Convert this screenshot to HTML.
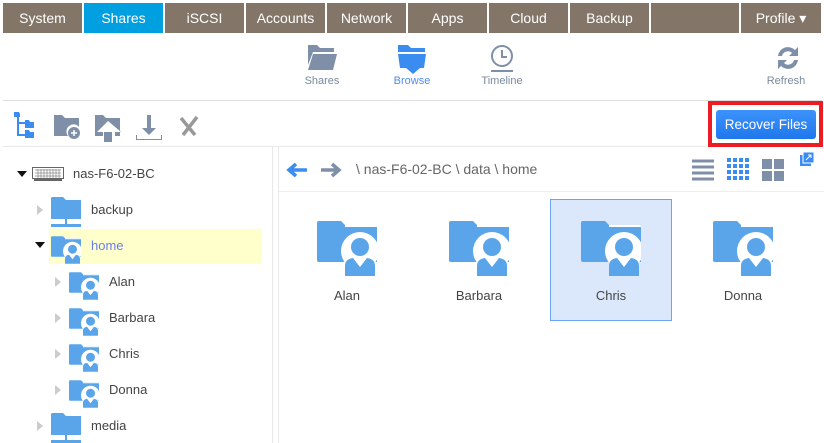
<!DOCTYPE html>
<html><head><meta charset="utf-8"><style>
*{margin:0;padding:0;box-sizing:border-box}
body{width:824px;height:443px;overflow:hidden;background:#fff;font-family:"Liberation Sans",sans-serif;position:relative;color:#444}
.a{position:absolute}
.tab{position:absolute;top:3px;height:30px;background:#837669;color:#fff;font-size:14px;text-align:center;line-height:30px}
.lbl{position:absolute;font-size:11px;color:#7a8a9e;text-align:center}
.tr{position:absolute;font-size:13px;color:#444}
.tri{position:absolute;width:0;height:0;border-top:5px solid transparent;border-bottom:5px solid transparent;border-left:6px solid #ccc}
.trd{position:absolute;width:0;height:0;border-left:5px solid transparent;border-right:5px solid transparent;border-top:6px solid #111}
.gl{position:absolute;font-size:13px;color:#444;text-align:center;width:122px}
</style></head><body>
<svg width="0" height="0" style="position:absolute">
<defs>
<symbol id="pf" viewBox="0 0 60 55">
<path fill="#5aa5ea" d="M2 0h22l4 4h32v37H2a2 2 0 0 1-2-2V2a2 2 0 0 1 2-2z"/>
<rect x="28" y="4" width="32" height="2" fill="#fff"/>
<circle cx="43" cy="30" r="19" fill="#fff"/>
<circle cx="43" cy="26" r="9" fill="#5aa5ea"/>
<path fill="#5aa5ea" d="M28 55V45q0-7 8-8l7 9l7-9q8 1 8 8v10z"/>
</symbol>
<symbol id="sf" viewBox="0 0 30 30">
<path fill="#5aa5ea" d="M1 0h11l3 3h15v19H0V1z"/>
<rect x="0" y="27" width="30" height="3" fill="#5aa5ea"/><rect x="14" y="22" width="2" height="5" fill="#5aa5ea"/>
</symbol>
</defs></svg>

<div class="tab" style="left:3px;width:79px">System</div>
<div class="tab" style="left:84px;width:79px;background:#009fe0">Shares</div>
<div class="tab" style="left:165px;width:79px">iSCSI</div>
<div class="tab" style="left:246px;width:79px">Accounts</div>
<div class="tab" style="left:327px;width:79px">Network</div>
<div class="tab" style="left:408px;width:79px">Apps</div>
<div class="tab" style="left:489px;width:79px">Cloud</div>
<div class="tab" style="left:570px;width:79px">Backup</div>
<div class="tab" style="left:651px;width:88px"></div>
<div class="tab" style="left:741px;width:80px">Profile ▾</div>

<svg class="a" style="left:307px;top:45px" width="30" height="26" viewBox="0 0 30 26"><path fill="#7f8fa8" d="M1 0h9l3 3h14v4H6L1 20z M6 9h24l-4 16H1z"/></svg>
<div class="lbl" style="left:290px;top:75px;width:64px">Shares</div>
<svg class="a" style="left:398px;top:45px" width="30" height="30" viewBox="0 0 30 30"><path fill="#3b8cf0" d="M0 0h10l3 3h14v4H0z M0 9h28l-2 14H18v-4h-6v4H2z M12 17h6v6h4l-7 6l-7-6h4z"/></svg>
<div class="lbl" style="left:380px;top:75px;width:64px;color:#4f8cf0">Browse</div>
<svg class="a" style="left:488px;top:44px" width="28" height="30" viewBox="0 0 28 30"><circle cx="14" cy="12" r="10" fill="none" stroke="#7f8fa8" stroke-width="2"/><path d="M14 6v7h5" fill="none" stroke="#7f8fa8" stroke-width="2"/><rect x="3" y="26" width="22" height="2" fill="#7f8fa8"/></svg>
<div class="lbl" style="left:470px;top:75px;width:64px">Timeline</div>
<svg class="a" style="left:775px;top:44px" width="26" height="28" viewBox="0 0 26 28"><path fill="#7f8fa8" d="M3 12a10 10 0 0 1 17-6l3-3v9h-9l3-3a6 6 0 0 0-10 3z M23 16a10 10 0 0 1-17 6l-3 3v-9h9l-3 3a6 6 0 0 0 10-3z"/></svg>
<div class="lbl" style="left:756px;top:75px;width:60px">Refresh</div>
<div class="a" style="left:3px;top:100px;width:819px;height:1px;background:#ddd"></div>

<svg class="a" style="left:14px;top:112px" width="26" height="26" viewBox="0 0 26 26"><path fill="#3b8cf0" d="M0 0h5l1 2h0v3H0z M3 5h2v17h6v2H3z M5 10h6v2H5z M11 8h4l1 2h4v6h-9z M11 18h4l1 2h4v6h-9z"/></svg>
<svg class="a" style="left:53px;top:115px" width="28" height="25" viewBox="0 0 28 25"><path fill="#7f8fa8" d="M1 0h8l3 3h14v9a7 7 0 0 0-11 9H1z"/><circle cx="21" cy="18" r="6" fill="#7f8fa8"/><path d="M21 15v6M18 18h6" stroke="#fff" stroke-width="1.5"/></svg>
<svg class="a" style="left:94px;top:115px" width="28" height="27" viewBox="0 0 28 27"><path fill="#7f8fa8" d="M1 0h8l3 3h14v18h-5v-4h6L14 6L3 17h6v4H1z M10 17h8v10h-8z"/></svg>
<svg class="a" style="left:135px;top:115px" width="28" height="26" viewBox="0 0 28 26"><path fill="#7f8fa8" d="M12 0h4v13h5l-7 7l-7-7h5z M1 20h1v4h24v-4h1v5H1z"/></svg>
<svg class="a" style="left:177px;top:115px" width="24" height="22" viewBox="0 0 24 22"><path d="M4 3L18 20M20 2L6 20" stroke="#999" stroke-width="3.5"/></svg>

<div class="a" style="left:708px;top:101px;width:115px;height:46px;border:4px solid #ed1c24"></div>
<div class="a" style="left:716px;top:110px;width:100px;height:29px;border-radius:3px;background:linear-gradient(#3d93fb,#1f77ec);color:#fff;font-size:13.5px;line-height:29px;text-align:center">Recover Files</div>
<div class="a" style="left:3px;top:146px;width:704px;height:1px;background:#e8e8e8"></div>
<div class="a" style="left:272px;top:147px;width:1px;height:296px;background:#e8e8e8"></div>
<div class="a" style="left:278px;top:147px;width:1px;height:296px;background:#e8e8e8"></div>

<div class="trd" style="left:17px;top:171px"></div>
<svg class="a" style="left:32px;top:167px" width="32" height="14" viewBox="0 0 32 14"><rect x="0.5" y="0.5" width="31" height="11" fill="none" stroke="#666"/><path d="M3 3h26M3 6h26M3 9h26M6 2v9M9 2v9M12 2v9M15 2v9M18 2v9M21 2v9M24 2v9M27 2v9" stroke="#888" stroke-width="0.7"/><rect x="2" y="12" width="28" height="2" fill="#666"/></svg>
<div class="tr" style="left:73px;top:166px">nas-F6-02-BC</div>

<div class="tri" style="left:37px;top:205px"></div>
<svg class="a" style="left:51px;top:197px" width="30" height="30"><use href="#sf"/></svg>
<div class="tr" style="left:91px;top:202px">backup</div>

<div class="a" style="left:49px;top:229px;width:213px;height:35px;background:#ffffcc"></div>
<div class="trd" style="left:35px;top:242px"></div>
<svg class="a" style="left:51px;top:236px" width="30" height="28"><use href="#pf"/></svg>
<div class="tr" style="left:91px;top:238px;color:#6a7cf0">home</div>

<div class="tri" style="left:55px;top:277px"></div>
<svg class="a" style="left:69px;top:272px" width="30" height="28"><use href="#pf"/></svg>
<div class="tr" style="left:109px;top:274px">Alan</div>
<div class="tri" style="left:55px;top:313px"></div>
<svg class="a" style="left:69px;top:308px" width="30" height="28"><use href="#pf"/></svg>
<div class="tr" style="left:109px;top:310px">Barbara</div>
<div class="tri" style="left:55px;top:349px"></div>
<svg class="a" style="left:69px;top:344px" width="30" height="28"><use href="#pf"/></svg>
<div class="tr" style="left:109px;top:346px">Chris</div>
<div class="tri" style="left:55px;top:385px"></div>
<svg class="a" style="left:69px;top:380px" width="30" height="28"><use href="#pf"/></svg>
<div class="tr" style="left:109px;top:382px">Donna</div>
<div class="tri" style="left:37px;top:421px"></div>
<svg class="a" style="left:51px;top:413px" width="30" height="30"><use href="#sf"/></svg>
<div class="tr" style="left:91px;top:418px">media</div>

<svg class="a" style="left:286px;top:162px" width="22" height="16" viewBox="0 0 22 16"><path d="M21 8H4M10 2L3 8l7 6" fill="none" stroke="#3b8cf0" stroke-width="3.5"/></svg>
<svg class="a" style="left:320px;top:162px" width="22" height="16" viewBox="0 0 22 16"><path d="M1 8h17M12 2l7 6l-7 6" fill="none" stroke="#7f8fa8" stroke-width="3.5"/></svg>
<div class="a" style="left:356px;top:161px;font-size:14px;color:#666">\ nas-F6-02-BC \ data \ home</div>
<svg class="a" style="left:692px;top:159px" width="24" height="22"><path d="M0 2h22M0 8h22M0 14h22M0 20h22" stroke="#7f8fa8" stroke-width="3"/></svg>
<svg class="a" style="left:727px;top:158px" width="24" height="24" viewBox="0 0 24 24" fill="#3b8cf0"><g id="r"><rect x="0" y="0" width="4" height="4"/><rect x="6" y="0" width="4" height="4"/><rect x="12" y="0" width="4" height="4"/><rect x="18" y="0" width="4" height="4"/></g><use href="#r" y="6"/><use href="#r" y="12"/><use href="#r" y="18"/></svg>
<svg class="a" style="left:762px;top:159px" width="24" height="23" fill="#7f8fa8"><rect x="0" y="0" width="10" height="10"/><rect x="12" y="0" width="10" height="10"/><rect x="0" y="12" width="10" height="10"/><rect x="12" y="12" width="10" height="10"/></svg>
<svg class="a" style="left:800px;top:152px" width="14" height="14" viewBox="0 0 14 14"><rect x="0" y="3" width="11" height="11" fill="#3b8cf0"/><rect x="3" y="0" width="11" height="11" fill="#3b8cf0" stroke="#fff"/><path d="M6 8l5-5M8 3h3v3" stroke="#fff" fill="none"/></svg>
<div class="a" style="left:279px;top:191px;width:545px;height:1px;background:#eee"></div>

<div class="a" style="left:550px;top:199px;width:122px;height:122px;background:#dbe8fc;border:1px solid #6aa4f2"></div>
<svg class="a" style="left:317px;top:221px" width="60" height="55"><use href="#pf"/></svg>
<div class="gl" style="left:286px;top:288px">Alan</div>
<svg class="a" style="left:449px;top:221px" width="60" height="55"><use href="#pf"/></svg>
<div class="gl" style="left:418px;top:288px">Barbara</div>
<svg class="a" style="left:581px;top:221px" width="60" height="55"><use href="#pf"/></svg>
<div class="gl" style="left:550px;top:288px">Chris</div>
<svg class="a" style="left:713px;top:221px" width="60" height="55"><use href="#pf"/></svg>
<div class="gl" style="left:682px;top:288px">Donna</div>
</body></html>
